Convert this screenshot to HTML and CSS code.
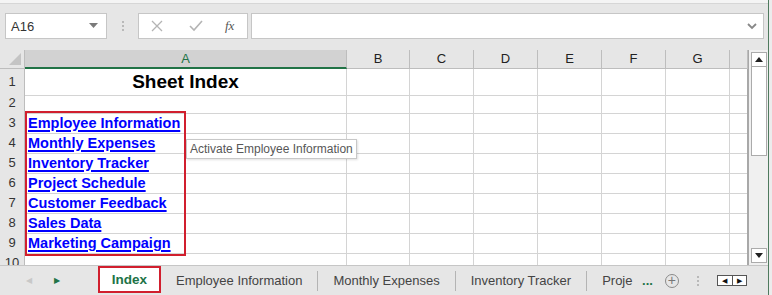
FILE: index.html
```html
<!DOCTYPE html>
<html lang="en">

<head>
  <meta charset="UTF-8" />
  <title>Sheet Index</title>
  <link rel="stylesheet" href="styles.css">
</head>

<body>
  <div class="window">
    <div class="top-strip"></div>

    <!-- Formula bar -->
    <div class="formula-bar">
      <div class="name-box">
        <span>A16</span>
        <svg class="caret" width="9" height="5" viewBox="0 0 9 5"><path d="M0 0h9L4.5 5z" fill="#7a7a7a" /></svg>
      </div>
      <div class="grip"><i></i><i></i><i></i></div>
      <div class="fx-buttons">
        <svg width="12" height="12" viewBox="0 0 12 12"><path d="M1 1l10 10M11 1L1 11" stroke="#b4b4b4" stroke-width="1.3" /></svg>
        <svg width="14" height="12" viewBox="0 0 14 12"><path d="M1 6l4 4 8-9" stroke="#b4b4b4" stroke-width="1.6" fill="none" /></svg>
        <span class="fx">fx</span>
      </div>
      <div class="formula-input">
        <svg width="10" height="7" viewBox="0 0 10 7"><path d="M1 1l4 4 4-4" stroke="#888" stroke-width="1.8" fill="none" /></svg>
      </div>
    </div>

    <!-- Sheet -->
    <div class="sheet-area">
      <div class="sheet">
        <div class="grid">
          <div class="corner"><span></span></div>
          <div class="col-head selected">A</div>
          <div class="col-head">B</div>
          <div class="col-head">C</div>
          <div class="col-head">D</div>
          <div class="col-head">E</div>
          <div class="col-head">F</div>
          <div class="col-head">G</div>
          <div class="col-head last"></div>
        </div>
        <div id="rows"></div>

        <div class="selection-box"></div>
        <div class="tooltip">Activate Employee Information</div>
      </div>

      <div class="scrollbar">
        <div class="scroll-btn"><svg width="8" height="5" viewBox="0 0 8 5"><path d="M0 5h8L4 0z" fill="#222" /></svg></div>
        <div class="thumb"></div>
        <div class="track"></div>
        <div class="scroll-btn"><svg width="8" height="5" viewBox="0 0 8 5"><path d="M0 0h8L4 5z" fill="#222" /></svg></div>
      </div>
    </div>

    <!-- Sheet tabs -->
    <div class="tab-bar">
      <span class="nav-arrow prev">&#9664;</span>
      <span class="nav-arrow next">&#9654;</span>
      <div class="tab active">Index</div>
      <div class="tab">Employee Information</div>
      <div class="tab-sep"></div>
      <div class="tab">Monthly Expenses</div>
      <div class="tab-sep"></div>
      <div class="tab">Inventory Tracker</div>
      <div class="tab-sep"></div>
      <div class="tab cut">Proje <b>...</b></div>
      <div class="add-sheet">+</div>
      <div class="grip small"><i></i><i></i><i></i></div>
      <div class="hscroll-nav">
        <span>&#9664;</span>
        <span>&#9654;</span>
      </div>
    </div>
  </div>

  <script>
    const links = [
      'Employee Information',
      'Monthly Expenses',
      'Inventory Tracker',
      'Project Schedule',
      'Customer Feedback',
      'Sales Data',
      'Marketing Campaign'
    ];

    const rows = document.getElementById('rows');
    for (let r = 1; r <= 10; r++) {
      const row = document.createElement('div');
      row.className = 'grid row' + (r === 1 ? ' title-row' : '') + (r === 10 ? ' cut-row' : '');

      let first = '<div class="cell"></div>';
      if (r === 1) first = '<div class="cell title">Sheet Index</div>';
      else if (links[r - 3]) first = '<div class="cell"><a href="#">' + links[r - 3] + '</a></div>';

      row.innerHTML = '<div class="row-head">' + r + '</div>' + first +
        '<div class="cell"></div>'.repeat(6) + '<div class="cell last"></div>';
      rows.appendChild(row);
    }
  </script>
</body>

</html>
```

FILE: styles.css
```css
:root {
  --chrome: #e6e6e6;
  --grid-line: #d4d4d4;
  --head-line: #bdbdbd;
  --excel-green: #217346;
  --link: #0000ff;
}

* {
  margin: 0;
  padding: 0;
  box-sizing: border-box;
}

body {
  width: 772px;
  height: 295px;
  overflow: hidden;
  font-family: "Liberation Sans", Arial, sans-serif;
  background: #ececec;
}

.window {
  width: 769px;
  height: 295px;
  display: flex;
  flex-direction: column;
  background: var(--chrome);
  border-right: 1px solid #4f7a5e;
}

.top-strip {
  height: 4px;
  background: #f4f4f4;
  border-bottom: 1px solid #d6d6d6;
}

/* Formula bar */
.formula-bar {
  height: 46px;
  display: flex;
  align-items: flex-start;
  padding: 9px 0 0 5px;
}

.name-box {
  width: 102px;
  height: 26px;
  background: #fff;
  border: 1px solid #c6c6c6;
  display: flex;
  align-items: center;
  justify-content: space-between;
  padding: 0 8px 0 5px;
  font-size: 13px;
  color: #333;
}

.name-box .caret {
  margin-bottom: 1px;
}

.grip {
  width: 31px;
  height: 26px;
  display: flex;
  flex-direction: column;
  align-items: center;
  justify-content: center;
  gap: 2px;
}

.grip i {
  width: 2px;
  height: 2px;
  background: #b9b9b9;
}

.fx-buttons {
  width: 110px;
  height: 26px;
  background: #fff;
  border: 1px solid #c6c6c6;
  display: flex;
  align-items: center;
  padding-left: 12px;
  gap: 26px;
}

.fx {
  font-family: "Liberation Serif", serif;
  font-style: italic;
  font-size: 13px;
  color: #555;
  margin-left: -4px;
}

.formula-input {
  width: 513px;
  height: 26px;
  margin-left: 3px;
  background: #fff;
  border: 1px solid #c6c6c6;
  display: flex;
  align-items: center;
  justify-content: flex-end;
  padding-right: 6px;
}

/* Sheet grid */
.sheet-area {
  height: 215px;
  display: flex;
}

.sheet {
  position: relative;
  width: 748px;
  overflow: hidden;
  background: #fff;
}

.grid {
  display: grid;
  grid-template-columns: 25px 322px 63px 64px 64px 64px 64px 64px 18px;
}

.corner {
  height: 19px;
  background: var(--chrome);
  border-right: 1px solid var(--head-line);
  border-bottom: 1px solid var(--head-line);
  position: relative;
}

.corner span {
  position: absolute;
  right: 3px;
  bottom: 3px;
  width: 0;
  height: 0;
  border-left: 12px solid transparent;
  border-bottom: 12px solid #c4c4c4;
}

.col-head {
  height: 19px;
  background: var(--chrome);
  border-right: 1px solid var(--head-line);
  border-bottom: 1px solid var(--head-line);
  font-size: 13px;
  color: #222;
  text-align: center;
  line-height: 18px;
}

.col-head.selected {
  background: #d2d2d2;
  color: var(--excel-green);
  border-bottom: 2px solid var(--excel-green);
}

.row {
  height: 20px;
}

.title-row {
  height: 24px;
}

.cut-row {
  height: 12px;
}

.row-head {
  background: var(--chrome);
  border-right: 1px solid var(--head-line);
  border-bottom: 1px solid var(--head-line);
  font-size: 13px;
  color: #333;
  text-align: center;
  line-height: 20px;
}

.title-row .row-head {
  line-height: 26px;
}

.cell {
  border-right: 1px solid var(--grid-line);
  border-bottom: 1px solid var(--grid-line);
  padding-left: 3px;
  font-size: 14.5px;
  font-weight: bold;
  line-height: 20px;
  white-space: nowrap;
}

.cell.last {
  border-right: 1px solid #a8a8a8;
}

.cell a {
  color: var(--link);
  text-decoration: underline;
  text-decoration-thickness: 2px;
  text-underline-offset: 2px;
}

.cell.title {
  text-align: center;
  font-size: 19px;
  line-height: 26px;
  padding-left: 0;
  color: #000;
}

.selection-box {
  position: absolute;
  left: 25px;
  top: 61px;
  width: 161px;
  height: 145px;
  border: 2px solid #d11f2e;
}

.tooltip {
  position: absolute;
  left: 186px;
  top: 89px;
  height: 20px;
  padding: 0 3px;
  background: #fff;
  border: 1px solid #c8c8c8;
  box-shadow: 1px 1px 2px rgba(0, 0, 0, 0.12);
  font-size: 12px;
  line-height: 18px;
  color: #575757;
}

/* Vertical scrollbar */
.scrollbar {
  width: 20px;
  background: #f0f0f0;
  border-left: 1px solid #a8a8a8;
  display: flex;
  flex-direction: column;
  align-items: center;
  padding: 2px 0 2px;
}

.scroll-btn {
  width: 16px;
  height: 15px;
  background: #fff;
  border: 1px solid #ababab;
  display: flex;
  align-items: center;
  justify-content: center;
}

.thumb {
  width: 16px;
  height: 89px;
  background: #fff;
  border: 1px solid #ababab;
  border-top: none;
}

.track {
  flex: 1;
}

/* Sheet tabs */
.tab-bar {
  height: 30px;
  display: flex;
  align-items: center;
  border-top: 1px solid #c6c6c6;
  font-size: 13px;
  color: #444;
}

.nav-arrow {
  font-size: 8px;
  width: 28px;
  text-align: center;
}

.nav-arrow.prev {
  margin-left: 15px;
  color: #c8c8c8;
}

.nav-arrow.next {
  color: var(--excel-green);
}

.tab {
  padding: 0 15px;
  white-space: nowrap;
}

.tab.active {
  margin-left: 27px;
  width: 63px;
  height: 27px;
  margin-top: -3px;
  padding: 0;
  background: #fff;
  border: 2px solid #d11f2e;
  color: var(--excel-green);
  font-size: 13.5px;
  font-weight: bold;
  text-align: center;
  line-height: 24px;
}

.tab.cut {
  padding-right: 8px;
}

.tab.cut b {
  color: var(--excel-green);
  margin-left: 6px;
}

.tab-sep {
  width: 1px;
  height: 20px;
  background: #b4b4b4;
}

.add-sheet {
  width: 14px;
  height: 14px;
  border: 1px solid #8a8a8a;
  border-radius: 50%;
  font-size: 14px;
  line-height: 11px;
  text-align: center;
  color: #777;
  margin-left: 4px;
}

.grip.small {
  width: 38px;
}

.hscroll-nav {
  display: flex;
  height: 11px;
  border: 1px solid #555;
  background: #fff;
}

.hscroll-nav span {
  width: 14px;
  font-size: 7px;
  line-height: 9px;
  text-align: center;
  color: #111;
}

.hscroll-nav span + span {
  border-left: 1px solid #555;
}
```
